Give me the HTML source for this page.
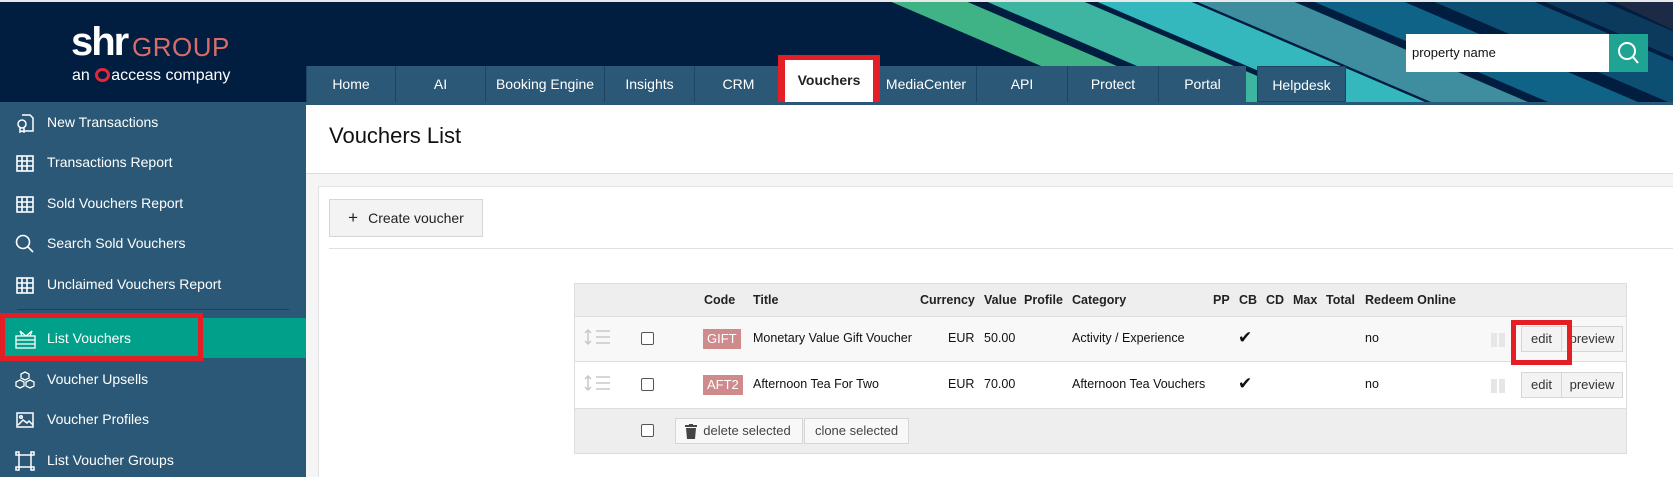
<!DOCTYPE html>
<html><head><meta charset="utf-8"><style>
*{box-sizing:border-box;margin:0;padding:0}
body{width:1673px;height:477px;overflow:hidden;background:#fff;font-family:"Liberation Sans",Arial,sans-serif;position:relative}
.abs{position:absolute}
#hdr{left:0;top:0;width:1673px;height:102px;background:#011d40;overflow:hidden}
.tab{position:absolute;top:66px;height:36px;background:#2b5877;border-left:1px solid #1d4462;color:#fff;font-size:14px;text-align:center;line-height:36px}
#side{left:0;top:102px;width:306px;height:375px;background:#2b5876}
.si{position:absolute;left:0;width:306px;height:40px;color:#fff;font-size:14px;line-height:40px;padding-left:47px}
.si svg{position:absolute;left:15px;top:11px}
.th{position:absolute;top:283px;height:34px;line-height:34px;font-size:12.5px;font-weight:bold;color:#222}
.td{position:absolute;font-size:12.5px;color:#111}
.cb{position:absolute;width:13px;height:13px;border:1px solid #555;border-radius:2px;background:#fff}
.badge{position:absolute;height:20px;line-height:20px;background:#cf8a8c;color:#fff;font-size:13px;padding:0 4px}
.btn{position:absolute;border:1px solid #d6d6d6;background:#f3f3f3;color:#333;font-size:13px;text-align:center}
.red{position:absolute;border:5px solid #e31e24;z-index:5}
</style></head><body>
<div class="abs" id="hdr">
<svg class="abs" style="left:0;top:0" width="1673" height="102">
<polygon points="887,0 963,0 1201,102 1125,102" fill="#3fb386"/>
<polygon points="983,0 1080,0 1318,102 1221,102" fill="#3db5a0"/>
<polygon points="1093,0 1187,0 1425,102 1331,102" fill="#35b8bd"/>
<polygon points="1193,0 1290,0 1528,102 1431,102" fill="#3e8ea0"/>
<polygon points="1310,0 1400,0 1638,102 1548,102" fill="#0f6386"/>
<polygon points="1430,0 1530,0 1768,102 1668,102" fill="#0d4f72"/>
<polygon points="1540,0 1600,0 1838,102 1778,102" fill="#0b3a5c"/>
<polygon points="1610,0 1673,0 1673,30" fill="#1c2a45"/>
<rect x="0" y="0" width="1673" height="2" fill="#e8e8e8"/>
</svg>
<div class="abs" style="left:71px;top:20px;color:#fff;font-size:40px;font-weight:bold;letter-spacing:-2px;line-height:44px">shr</div>
<div class="abs" style="left:132px;top:32px;color:#d96b69;font-size:26px;line-height:30px;letter-spacing:0.5px">GROUP</div>
<div class="abs" style="left:72px;top:67px;color:#fff;font-size:16px;line-height:18px">an <span style="display:inline-block;width:15px;height:14px;border:3px solid #e4253a;border-radius:50%;vertical-align:-2px;margin:0 1px"></span>access company</div>
<div class="tab" style="left:306px;width:89px">Home</div>
<div class="tab" style="left:395px;width:90px">AI</div>
<div class="tab" style="left:485px;width:119px">Booking Engine</div>
<div class="tab" style="left:604px;width:90px">Insights</div>
<div class="tab" style="left:694px;width:88px">CRM</div>
<div class="tab" style="left:875px;width:101px">MediaCenter</div>
<div class="tab" style="left:976px;width:91px">API</div>
<div class="tab" style="left:1067px;width:91px">Protect</div>
<div class="tab" style="left:1158px;width:88px">Portal</div>
<div class="tab" style="left:1257px;width:89px;border:1px solid #1d4462">Helpdesk</div>
<div class="abs" style="left:778px;top:55px;width:102px;height:47px;background:#e31e24"></div>
<div class="abs" style="left:785px;top:60px;width:88px;height:42px;background:#fff;color:#222;font-weight:bold;font-size:14px;text-align:center;line-height:40px">Vouchers</div>
<div class="abs" style="left:1406px;top:34px;width:203px;height:38px;background:#fff;font-size:13px;line-height:38px;padding-left:6px;color:#111">property name</div>
<div class="abs" style="left:1609px;top:34px;width:39px;height:38px;background:#1fa392"><svg width="39" height="38"><circle cx="18" cy="17" r="8" fill="none" stroke="#fff" stroke-width="2"/><line x1="24" y1="23" x2="29" y2="29" stroke="#fff" stroke-width="2"/></svg></div>
</div>
<div class="abs" style="left:0;top:102px;width:1673px;height:3px;background:#2b5877"></div>
<div class="abs" id="side">
<div class="si" style="top:0">New Transactions<svg width="20" height="20" fill="none" stroke="#fff" stroke-width="1.5"><path d="M7 2h8l3 3v13H8"/><circle cx="7" cy="11" r="4"/><path d="M5 15v4l2-1 2 1v-4"/></svg></div>
<div class="si" style="top:40px">Transactions Report<svg width="20" height="20" fill="none" stroke="#fff" stroke-width="1.6"><rect x="2" y="3" width="16" height="15"/><path d="M2 8h16M2 13h16M7 3v15M12 3v15"/></svg></div>
<div class="si" style="top:81px">Sold Vouchers Report<svg width="20" height="20" fill="none" stroke="#fff" stroke-width="1.6"><rect x="2" y="3" width="16" height="15"/><path d="M2 8h16M2 13h16M7 3v15M12 3v15"/></svg></div>
<div class="si" style="top:121px">Search Sold Vouchers<svg width="20" height="20" fill="none" stroke="#fff" stroke-width="1.6"><circle cx="8" cy="8" r="6.5"/><path d="M13 13l5 5"/></svg></div>
<div class="si" style="top:162px">Unclaimed Vouchers Report<svg width="20" height="20" fill="none" stroke="#fff" stroke-width="1.6"><rect x="2" y="3" width="16" height="15"/><path d="M2 8h16M2 13h16M7 3v15M12 3v15"/></svg></div>
<div class="abs" style="left:17px;top:207px;width:272px;height:1px;background:#1d3f5a"></div>
<div class="si" style="top:216px;background:#00a08a">List Vouchers<svg width="22" height="20" fill="none" stroke="#fff" stroke-width="1.3"><rect x="1" y="7" width="19" height="12"/><path d="M1 11h19M1 15h19M7 7L5 2l6 5 6-5-2 5"/></svg></div>
<div class="red" style="left:0;top:211px;width:203px;height:48px"></div>
<div class="si" style="top:257px">Voucher Upsells<svg width="20" height="20" fill="none" stroke="#fff" stroke-width="1.3"><path d="M10 2l4 2v4l-4 2-4-2V4zM5 10l4 2v4l-4 2-4-2v-4zM15 10l4 2v4l-4 2-4-2v-4z"/></svg></div>
<div class="si" style="top:297px">Voucher Profiles<svg width="20" height="20" fill="none" stroke="#fff" stroke-width="1.5"><rect x="2" y="3" width="16" height="14"/><path d="M3 15l5-5 4 3 2-2 4 4"/><circle cx="6" cy="7" r="1.3"/></svg></div>
<div class="si" style="top:338px">List Voucher Groups<svg width="20" height="20" fill="none" stroke="#fff" stroke-width="1.5"><rect x="4" y="4" width="12" height="12"/><rect x="1" y="1" width="3" height="3"/><rect x="16" y="1" width="3" height="3"/><rect x="1" y="16" width="3" height="3"/><rect x="16" y="16" width="3" height="3"/></svg></div>
</div>
<div class="abs" style="left:306px;top:105px;width:1367px;height:372px;background:#fff"></div>
<div class="abs" style="left:329px;top:123px;font-size:22px;color:#111">Vouchers List</div>
<div class="abs" style="left:306px;top:173px;width:1367px;height:1px;background:#ddd"></div>
<div class="abs" style="left:306px;top:174px;width:1367px;height:303px;background:#f5f5f5"></div>
<div class="abs" style="left:318px;top:186px;width:1355px;height:291px;background:#fff;border:1px solid #e2e2e2;border-right:none;border-bottom:none"></div>
<div class="btn" style="left:329px;top:199px;width:154px;height:38px;line-height:36px;font-size:14px;color:#222"><span style="font-size:17px;margin-right:10px">+</span>Create voucher</div>
<div class="abs" style="left:329px;top:248px;width:1344px;height:1px;background:#e0e0e0"></div>
<div class="abs" style="left:574px;top:283px;width:1053px;height:171px;border:1px solid #ddd;background:#fff"></div>
<div class="abs" style="left:575px;top:284px;width:1051px;height:33px;background:#eeeeee;border-bottom:1px solid #ddd"></div>
<div class="abs" style="left:575px;top:317px;width:1051px;height:45px;background:#f8f8f8;border-bottom:1px solid #ddd"></div>
<div class="abs" style="left:575px;top:408px;width:1051px;height:45px;background:#eeeeee;border-top:1px solid #ddd"></div>
<div class="th" style="left:704px">Code</div><div class="th" style="left:753px">Title</div>
<div class="th" style="left:920px">Currency</div><div class="th" style="left:984px">Value</div>
<div class="th" style="left:1024px">Profile</div><div class="th" style="left:1072px">Category</div>
<div class="th" style="left:1213px">PP</div><div class="th" style="left:1239px">CB</div>
<div class="th" style="left:1266px">CD</div><div class="th" style="left:1293px">Max</div>
<div class="th" style="left:1326px">Total</div><div class="th" style="left:1365px">Redeem Online</div>
<svg class="abs" style="left:584px;top:328px" width="36" height="20" fill="none" stroke="#c8c8c8" stroke-width="1.5"><path d="M4 2v14M1 5l3-3 3 3M1 13l3 3 3-3M12 3h14M12 9h14M12 15h14"/></svg>
<svg class="abs" style="left:584px;top:374px" width="36" height="20" fill="none" stroke="#c8c8c8" stroke-width="1.5"><path d="M4 2v14M1 5l3-3 3 3M1 13l3 3 3-3M12 3h14M12 9h14M12 15h14"/></svg>
<div class="cb" style="left:641px;top:332px"></div><div class="cb" style="left:641px;top:378px"></div>
<div class="badge" style="left:703px;top:329px">GIFT</div><div class="badge" style="left:703px;top:375px">AFT2</div>
<div class="td" style="left:753px;top:331px">Monetary Value Gift Voucher</div>
<div class="td" style="left:753px;top:377px">Afternoon Tea For Two</div>
<div class="td" style="left:948px;top:331px">EUR</div><div class="td" style="left:984px;top:331px">50.00</div>
<div class="td" style="left:948px;top:377px">EUR</div><div class="td" style="left:984px;top:377px">70.00</div>
<div class="td" style="left:1072px;top:331px">Activity / Experience</div>
<div class="td" style="left:1072px;top:377px">Afternoon Tea Vouchers</div>
<div class="td" style="left:1238px;top:328px;font-size:17px">✔</div><div class="td" style="left:1238px;top:374px;font-size:17px">✔</div>
<div class="td" style="left:1365px;top:331px">no</div><div class="td" style="left:1365px;top:377px">no</div>
<div class="abs" style="left:1491px;top:333px;width:6px;height:14px;background:#e6e6e6"></div>
<div class="abs" style="left:1499px;top:333px;width:6px;height:14px;background:#e6e6e6"></div>
<div class="abs" style="left:1491px;top:379px;width:6px;height:14px;background:#e6e6e6"></div>
<div class="abs" style="left:1499px;top:379px;width:6px;height:14px;background:#e6e6e6"></div>
<div class="btn" style="left:1521px;top:326px;width:41px;height:26px;line-height:24px">edit</div>
<div class="btn" style="left:1561px;top:326px;width:62px;height:26px;line-height:24px">preview</div>
<div class="red" style="left:1511px;top:320px;width:61px;height:45px"></div>
<div class="btn" style="left:1521px;top:372px;width:41px;height:26px;line-height:24px">edit</div>
<div class="btn" style="left:1561px;top:372px;width:62px;height:26px;line-height:24px">preview</div>
<div class="cb" style="left:641px;top:424px"></div>
<div class="btn" style="left:675px;top:418px;width:128px;height:26px;line-height:24px;background:#f8f8f8;color:#444;padding-left:16px"><svg style="position:absolute;left:9px;top:5px" width="12" height="15"><rect x="0" y="1" width="12" height="2" fill="#444"/><rect x="4" y="0" width="4" height="2" fill="#444"/><path d="M1 4h10l-1 11H2z" fill="#444"/></svg>delete selected</div>
<div class="btn" style="left:804px;top:418px;width:105px;height:26px;line-height:24px;background:#f8f8f8;color:#444">clone selected</div>
</body></html>
